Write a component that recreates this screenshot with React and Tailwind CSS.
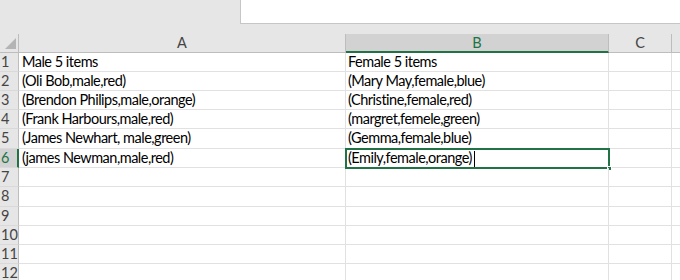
const rowHeights = ["h-[19px]", "h-[19px]", "h-[19px]", "h-[19px]", "h-[20px]", "h-[19px]", "h-[19px]", "h-[20px]", "h-[19px]", "h-[19px]", "h-[19px]", "h-[19px]"];

const cells = [
  ["Male 5 items", "Female 5 items"],
  ["(Oli Bob,male,red)", "(Mary May,female,blue)"],
  ["(Brendon Philips,male,orange)", "(Christine,female,red)"],
  ["(Frank Harbours,male,red)", "(margret,femele,green)"],
  ["(James Newhart, male,green)", "(Gemma,female,blue)"],
  ["(james Newman,male,red)", "(Emily,female,orange)"],
];

function Row({ n, h }) {
  const data = cells[n - 1] || ["", ""];
  const active = n === 6;
  return (
    <div className={`flex ${h}`}>
      <div
        className={`w-[19px] shrink-0 border-b border-[#d9d9d9] pl-[1px] leading-[18px] ${
          active ? "bg-[#d2d2d2] text-[#217346] border-r-2 border-r-[#217346]" : "bg-[#e6e6e6] text-[#444] border-r border-r-[#bdbdbd]"
        }`}
      >
        {n}
      </div>
      <div className="w-[327px] shrink-0 border-b border-r border-[#e1e1e1] pl-[3px] leading-[18px] tracking-[-0.5px] text-black whitespace-nowrap overflow-hidden">
        {data[0]}
      </div>
      <div className="relative w-[263px] shrink-0 border-b border-r border-[#e1e1e1] pl-[2px] leading-[18px] tracking-[-0.5px] text-black whitespace-nowrap">
        {data[1]}
        {active && (
          <>
            <span className="inline-block w-px h-[17px] bg-black align-middle ml-[2px]" />
            <div className="absolute -left-px -top-px w-[265px] h-[21px] border-2 border-[#217346]" />
            <div className="absolute -right-[4px] -bottom-[4px] w-[5px] h-[5px] bg-[#217346] border border-white" />
          </>
        )}
      </div>
      <div className="w-[63px] shrink-0 border-b border-r border-[#e1e1e1]" />
      <div className="flex-1 border-b border-[#e1e1e1]" />
    </div>
  );
}

export default function App() {
  return (
    <div className="w-[680px] h-[280px] overflow-hidden bg-white text-[14.5px]" style={{ fontFamily: "Lato, 'Liberation Sans', sans-serif" }}>
      <div className="flex h-[24px] bg-[#e6e6e6]">
        <div className="w-[240px]" />
        <div className="flex-1 bg-white border-l border-b border-[#c6c6c6]" />
      </div>
      <div className="h-[10px] bg-[#e6e6e6]" />
      <div className="flex h-[19px] bg-[#e6e6e6] text-[#444]">
        <div className="relative w-[19px] shrink-0 border-r border-b border-[#bdbdbd]">
          <svg className="absolute left-[5px] top-[4px]" width="11" height="11" viewBox="0 0 11 11">
            <polygon points="11,0 11,11 0,11" fill="#b4b4b4" />
          </svg>
        </div>
        <div className="w-[327px] shrink-0 border-r border-b border-[#bdbdbd] text-center leading-[18px]">A</div>
        <div className="w-[263px] shrink-0 border-r border-[#bdbdbd] border-b-2 border-b-[#217346] bg-[#d2d2d2] text-[#217346] text-center leading-[17px]">B</div>
        <div className="w-[63px] shrink-0 border-r border-b border-[#bdbdbd] text-center leading-[18px]">C</div>
        <div className="flex-1 border-b border-[#bdbdbd]" />
      </div>
      {rowHeights.map((h, i) => (
        <Row key={i} n={i + 1} h={h} />
      ))}
    </div>
  );
}
